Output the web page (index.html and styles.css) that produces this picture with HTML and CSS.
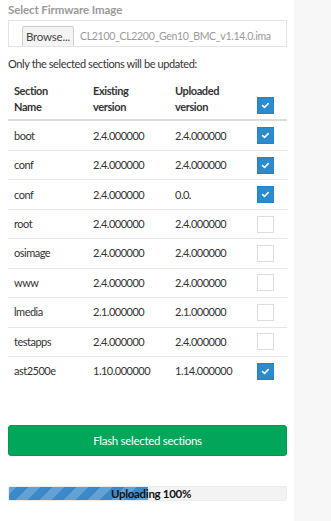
FILE: index.html
```html
<!DOCTYPE html>
<html>
<head>
<meta charset="utf-8">
<link rel="stylesheet" href="styles.css">
</head>
<body>
<div class="page">
  <div class="main">
    <div class="label">Select Firmware Image</div>
    <div class="file-box">
      <span class="browse">Browse...</span>
      <span class="filename">CL2100_CL2200_Gen10_BMC_v1.14.0.ima</span>
    </div>
    <p class="note">Only the selected sections will be updated:</p>
    <table class="sections">
      <colgroup>
        <col class="c1"><col class="c2"><col class="c3"><col class="c4">
      </colgroup>
      <thead>
        <tr>
          <th>Section<br>Name</th>
          <th>Existing<br>version</th>
          <th>Uploaded<br>version</th>
          <th class="chk"><span class="cb on"><svg viewBox="0 0 17 17"><path d="M5.2 8.6 L7.4 10.6 L11.6 6.4" /></svg></span></th>
        </tr>
      </thead>
      <tbody>
        <tr><td>boot</td><td>2.4.000000</td><td>2.4.000000</td><td class="chk"><span class="cb on"><svg viewBox="0 0 17 17"><path d="M5.2 8.6 L7.4 10.6 L11.6 6.4" /></svg></span></td></tr>
        <tr><td>conf</td><td>2.4.000000</td><td>2.4.000000</td><td class="chk"><span class="cb on"><svg viewBox="0 0 17 17"><path d="M5.2 8.6 L7.4 10.6 L11.6 6.4" /></svg></span></td></tr>
        <tr><td>conf</td><td>2.4.000000</td><td>0.0.</td><td class="chk"><span class="cb on"><svg viewBox="0 0 17 17"><path d="M5.2 8.6 L7.4 10.6 L11.6 6.4" /></svg></span></td></tr>
        <tr><td>root</td><td>2.4.000000</td><td>2.4.000000</td><td class="chk"><span class="cb"></span></td></tr>
        <tr><td>osimage</td><td>2.4.000000</td><td>2.4.000000</td><td class="chk"><span class="cb"></span></td></tr>
        <tr><td>www</td><td>2.4.000000</td><td>2.4.000000</td><td class="chk"><span class="cb"></span></td></tr>
        <tr><td>lmedia</td><td>2.1.000000</td><td>2.1.000000</td><td class="chk"><span class="cb"></span></td></tr>
        <tr><td>testapps</td><td>2.4.000000</td><td>2.4.000000</td><td class="chk"><span class="cb"></span></td></tr>
        <tr><td>ast2500e</td><td>1.10.000000</td><td>1.14.000000</td><td class="chk"><span class="cb on"><svg viewBox="0 0 17 17"><path d="M5.2 8.6 L7.4 10.6 L11.6 6.4" /></svg></span></td></tr>
      </tbody>
    </table>
    <button class="flash">Flash selected sections</button>
    <div class="progress">
      <div class="bar" style="width: 50%"></div>
      <span class="ptext">Uploading 100%</span>
    </div>
  </div>
  <div class="side"></div>
</div>
</body>
</html>
```

FILE: styles.css
```css
html, body {
  margin: 0;
  padding: 0;
  height: 100%;
  background: #ffffff;
}
body {
  font-family: "Lato", "Open Sans", sans-serif;
  font-size: 11px;
  letter-spacing: -0.4px;
  color: #333333;
}
.page {
  display: flex;
  height: 521px;
}
.main {
  width: 279px;
  padding: 0 7px 0 8px;
  background: #ffffff;
}
.side {
  flex: 1;
  background: #f7f7f7;
}
.label {
  margin-top: 2px;
  height: 16px;
  line-height: 16px;
  font-weight: 700;
  color: #9a9a9a;
  font-size: 11.5px;
  letter-spacing: -0.1px;
}
.file-box {
  margin-top: 2px;
  border: 1px solid #e4e4e4;
  overflow: hidden;
  display: flex;
  align-items: flex-start;
  padding: 5px 0 0 13px;
  box-sizing: border-box;
  height: 27px;
}
.browse {
  display: block;
  width: 52px;
  height: 24px;
  box-sizing: border-box;
  border: 1px solid #cfcfcf;
  border-radius: 2px;
  background: #f4f4f4;
  color: #444;
  font-size: 11.5px;
  letter-spacing: -0.2px;
  line-height: 19px;
  text-align: center;
  flex: none;
}
.filename {
  margin-left: 6px;
  color: #999;
  font-size: 10.5px;
  letter-spacing: -0.3px;
  line-height: 20px;
  white-space: nowrap;
}
.note {
  margin: 9px 0 0;
  height: 16px;
  line-height: 16px;
}
.sections {
  margin-top: 5px;
  width: 279px;
  border-collapse: collapse;
  table-layout: fixed;
}
.c1 { width: 79px; }
.c2 { width: 82px; }
.c3 { width: 77px; }
.c4 { width: 41px; }
.sections th {
  text-align: left;
  font-weight: 700;
  line-height: 16px;
  padding: 6px 6px 4px;
  border-bottom: 2px solid #dcdcdc;
  vertical-align: bottom;
}
.sections td {
  padding: 0 6px;
  height: 28.43px;
  line-height: 16px;
  vertical-align: middle;
  border-top: 1px solid #e6e6e6;
  letter-spacing: -0.5px;
}
.sections tbody tr:first-child td {
  border-top: none;
  height: 29px;
}
.sections .chk {
  padding: 0 0 0 11px;
}
.sections th.chk {
  padding-bottom: 5px;
}
.cb {
  display: block;
  width: 17px;
  height: 17px;
  box-sizing: border-box;
  border: 1px solid #dedede;
  background: #fff;
}
.cb.on {
  background: #2b8bcb;
  border-color: #2582c4;
}
.cb svg {
  display: block;
  width: 15px;
  height: 15px;
}
.cb path {
  fill: none;
  stroke: #fff;
  stroke-width: 1.8;
  stroke-linecap: round;
  stroke-linejoin: round;
}
.flash {
  display: block;
  margin-top: 40px;
  width: 279px;
  height: 31px;
  border: 1px solid #05984f;
  border-radius: 3px;
  background: #00a65a;
  color: #fff;
  font-family: "Lato", "Open Sans", sans-serif;
  font-size: 11.5px;
  letter-spacing: -0.3px;
  padding: 0;
}
.progress {
  position: relative;
  margin-top: 30px;
  height: 15px;
  border-radius: 2px;
  background: #f3f3f3;
  border: 1px solid #ececec;
  box-sizing: border-box;
  overflow: hidden;
}
.bar {
  height: 100%;
  background-color: #3c89c9;
  background-image: linear-gradient(135deg, rgba(255,255,255,.2) 25%, transparent 25%, transparent 50%, rgba(255,255,255,.2) 50%, rgba(255,255,255,.2) 75%, transparent 75%, transparent);
  background-size: 24px 24px;
  background-position: 0 -4px;
}
.ptext {
  position: absolute;
  left: 0;
  right: -7px;
  top: 0;
  text-align: center;
  font-weight: 700;
  color: #111;
  line-height: 13px;
  font-size: 11.5px;
  letter-spacing: -0.3px;
}
```
